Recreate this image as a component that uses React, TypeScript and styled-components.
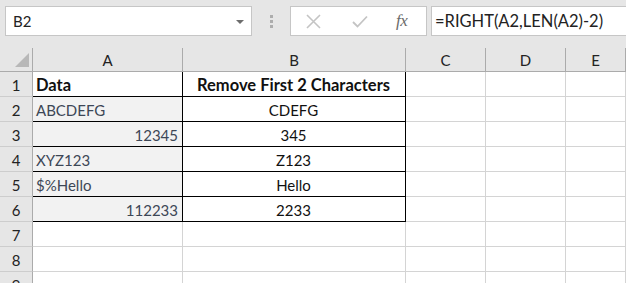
import styled, { createGlobalStyle } from 'styled-components';

const GlobalStyle = createGlobalStyle`
  html, body {
    margin: 0;
    padding: 0;
    background: #ffffff;
    font-family: Lato, "Liberation Sans", sans-serif;
  }
`;

const Sheet = styled.div`
  width: 626px;
  height: 283px;
  overflow: hidden;
  display: flex;
  flex-direction: column;
  background: #e6e6e6;
`;

const FormulaBar = styled.div`
  flex-shrink: 0;
  height: 48px;
  box-sizing: border-box;
  padding: 6px 0 0 5px;
  display: flex;
  align-items: flex-start;
`;

const NameBox = styled.div`
  width: 247px;
  height: 30px;
  box-sizing: border-box;
  border: 1px solid #c6c6c6;
  background: #ffffff;
  display: flex;
  align-items: center;
  justify-content: space-between;
  padding: 0 7px 0 7px;
  font-size: 15px;
  color: #222;
`;

const Caret = styled.span`
  width: 0;
  height: 0;
  border-left: 4px solid transparent;
  border-right: 4px solid transparent;
  border-top: 4px solid #6d6d6d;
  margin-top: 2px;
`;

const Grip = styled.div`
  width: 38px;
  height: 30px;
  display: flex;
  flex-direction: column;
  align-items: center;
  justify-content: center;
  gap: 2px;

  span {
    width: 3px;
    height: 3px;
    background: #adadad;
  }
`;

const IconBox = styled.div`
  width: 137px;
  height: 30px;
  box-sizing: border-box;
  border: 1px solid #c6c6c6;
  background: #ffffff;
  display: flex;
  align-items: center;
  padding: 0 0 0 15px;
`;

const IconSlot = styled.div<{ $w: number }>`
  width: ${(p) => p.$w}px;
  height: 28px;
  display: flex;
  align-items: center;
`;

const Fx = styled.span`
  font-family: "Liberation Serif", "DejaVu Serif", serif;
  font-style: italic;
  font-size: 17px;
  color: #6b6b6b;
  letter-spacing: -0.5px;
`;

const FormulaInput = styled.div`
  flex: 1;
  margin-left: 4px;
  height: 30px;
  box-sizing: border-box;
  border: 1px solid #c6c6c6;
  border-right: none;
  background: #ffffff;
  display: flex;
  align-items: center;
  padding-left: 3px;
  font-size: 16.5px;
  color: #222;
`;

const Grid = styled.div`
  flex: 1;
  display: grid;
  grid-template-columns: 33px 150px 223px 80px 80px 1fr;
  grid-template-rows: 24px;
  grid-auto-rows: 25px;
  background: #ffffff;
`;

const Corner = styled.div`
  background: #e6e6e6;
  border-right: 1px solid #ababab;
  border-bottom: 1px solid #ababab;
  position: relative;

  &::after {
    content: '';
    position: absolute;
    right: 3px;
    bottom: 4px;
    width: 0;
    height: 0;
    border-left: 14px solid transparent;
    border-bottom: 14px solid #b8b8b8;
  }
`;

const ColHead = styled.div`
  background: #e6e6e6;
  border-right: 1px solid #ababab;
  border-bottom: 1px solid #ababab;
  display: flex;
  align-items: center;
  justify-content: center;
  padding-top: 1px;
  font-size: 15px;
  color: #222;
`;

const RowHead = styled.div`
  background: #e6e6e6;
  border-right: 1px solid #ababab;
  border-bottom: 1px solid #cdcdcd;
  display: flex;
  align-items: center;
  justify-content: center;
  padding-top: 1px;
  font-size: 15px;
  color: #222;
`;

const Cell = styled.div<{
  $align?: 'left' | 'right' | 'center';
  $fill?: boolean;
  $boxed?: boolean;
  $bold?: boolean;
  $muted?: boolean;
}>`
  box-sizing: border-box;
  background: ${(p) => (p.$fill ? '#f2f2f2' : '#ffffff')};
  border-right: 1px solid ${(p) => (p.$boxed ? '#000000' : '#d4d4d4')};
  border-bottom: 1px solid ${(p) => (p.$boxed ? '#000000' : '#d4d4d4')};
  display: flex;
  align-items: center;
  justify-content: ${(p) =>
    p.$align === 'right' ? 'flex-end' : p.$align === 'center' ? 'center' : 'flex-start'};
  padding: 2px 4px 0 3px;
  font-size: ${(p) => (p.$bold ? '16.5px' : '15px')};
  font-weight: ${(p) => (p.$bold ? 700 : 400)};
  color: ${(p) => (p.$muted ? '#3d4756' : '#111111')};
  white-space: nowrap;
  overflow: hidden;
`;

interface IRow {
  a: string;
  b: string;
  aAlign: 'left' | 'right';
}

const rows: IRow[] = [
  { a: 'ABCDEFG', b: 'CDEFG', aAlign: 'left' },
  { a: '12345', b: '345', aAlign: 'right' },
  { a: 'XYZ123', b: 'Z123', aAlign: 'left' },
  { a: '$%Hello', b: 'Hello', aAlign: 'left' },
  { a: '112233', b: '2233', aAlign: 'right' },
];

const Blanks = () => (
  <>
    <Cell />
    <Cell />
    <Cell />
  </>
);

const App = () => {
  return (
    <>
      <GlobalStyle />
      <Sheet>
        <FormulaBar>
          <NameBox>
            B2
            <Caret />
          </NameBox>
          <Grip>
            <span />
            <span />
            <span />
          </Grip>
          <IconBox>
            <IconSlot $w={46}>
              <svg width="15" height="15" viewBox="0 0 15 15">
                <path d="M1 1 L14 14 M14 1 L1 14" stroke="#c4c4c4" strokeWidth="1.6" fill="none" />
              </svg>
            </IconSlot>
            <IconSlot $w={44}>
              <svg width="16" height="13" viewBox="0 0 16 13">
                <path d="M1 7 L5.5 11.5 L15 1.5" stroke="#c4c4c4" strokeWidth="1.8" fill="none" />
              </svg>
            </IconSlot>
            <IconSlot $w={30}>
              <Fx>fx</Fx>
            </IconSlot>
          </IconBox>
          <FormulaInput>=RIGHT(A2,LEN(A2)-2)</FormulaInput>
        </FormulaBar>
        <Grid>
          <Corner />
          {['A', 'B', 'C', 'D', 'E'].map((c) => (
            <ColHead key={c}>{c}</ColHead>
          ))}

          <RowHead>1</RowHead>
          <Cell $boxed $bold>
            Data
          </Cell>
          <Cell $boxed $bold $align="center">
            Remove First 2 Characters
          </Cell>
          <Blanks />

          {rows.map((r, i) => (
            <>
              <RowHead key={`h${i}`}>{i + 2}</RowHead>
              <Cell key={`a${i}`} $boxed $fill $muted $align={r.aAlign}>
                {r.a}
              </Cell>
              <Cell key={`b${i}`} $boxed $align="center">
                {r.b}
              </Cell>
              <Blanks key={`x${i}`} />
            </>
          ))}

          {[7, 8, 9].map((n) => (
            <>
              <RowHead key={`h${n}`}>{n}</RowHead>
              <Cell key={`a${n}`} />
              <Cell key={`b${n}`} />
              <Blanks key={`x${n}`} />
            </>
          ))}
        </Grid>
      </Sheet>
    </>
  );
};

export default App;
